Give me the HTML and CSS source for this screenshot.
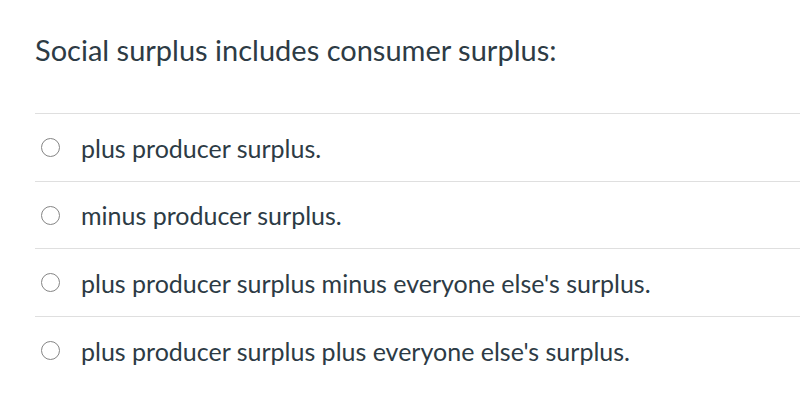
FILE: index.html
```html
<!DOCTYPE html>
<html>
<head>
<meta charset="utf-8">
<link rel="stylesheet" href="styles.css">
</head>
<body>
<div class="question">
  <h1 class="prompt">Social surplus includes consumer surplus:</h1>
  <ul class="answers">
    <li class="answer"><span class="radio"></span><span class="label">plus producer surplus.</span></li>
    <li class="answer"><span class="radio"></span><span class="label">minus producer surplus.</span></li>
    <li class="answer"><span class="radio"></span><span class="label">plus producer surplus minus everyone else's surplus.</span></li>
    <li class="answer"><span class="radio"></span><span class="label">plus producer surplus plus everyone else's surplus.</span></li>
  </ul>
</div>
</body>
</html>
```
FILE: styles.css
```css
html, body {
  margin: 0;
  padding: 0;
  background: #ffffff;
}
body {
  font-family: Lato, "Noto Sans", sans-serif;
  color: #2d3b45;
}
.question {
  padding: 28px 0 0 35px;
}
.prompt {
  margin: 0;
  font-size: 29px;
  font-weight: 400;
  line-height: 44px;
  height: 85px;
}
.answers {
  list-style: none;
  margin: 0;
  padding: 0;
}
.answer {
  display: flex;
  align-items: center;
  height: 67px;
  border-top: 1px solid #dfdfdf;
  padding-left: 6px;
}
.answer:nth-child(2) {
  height: 66px;
}
.radio {
  box-sizing: border-box;
  width: 19px;
  height: 19px;
  border: 1.6px solid #858585;
  border-radius: 50%;
  flex: none;
  margin-right: 21px;
}
.label {
  font-size: 25px;
  line-height: 30px;
}
```
